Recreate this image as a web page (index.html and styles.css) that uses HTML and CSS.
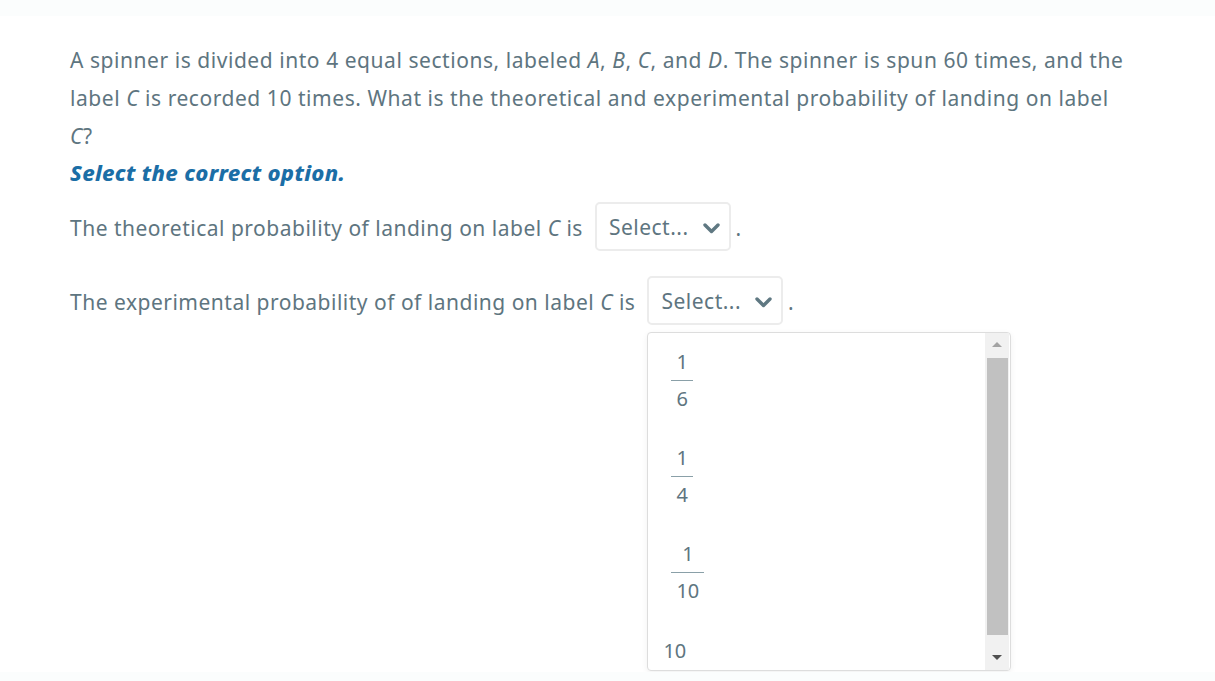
FILE: index.html
```html
<!DOCTYPE html>
<html lang="en">
<head>
    <meta charset="UTF-8">
    <title>Probability question</title>
    <link rel="stylesheet" href="styles.css">
</head>
<body>
    <div class="topbar"></div>
    <div class="panel">
        <p class="question">A spinner is divided into 4 equal sections, labeled <i>A</i>, <i>B</i>, <i>C</i>, and <i>D</i>. The spinner is spun 60 times, and the label <i>C</i> is recorded 10 times. What is the theoretical and experimental probability of landing on label <i>C</i>?</p>
        <p class="instruction">Select the correct option.</p>

        <div class="row">
            <span class="label">The theoretical probability of landing on label <i>C</i> is</span>
            <div class="select">Select... <span class="chev"><svg width="17" height="11" viewBox="0 0 17 11"><path d="M2 2l6.5 6.5L15 2" fill="none" stroke="#5f7882" stroke-width="3.4" stroke-linecap="round" stroke-linejoin="round"/></svg></span></div>
            <span class="dot">.</span>
        </div>

        <div class="row second">
            <span class="label">The experimental probability of of landing on label <i>C</i> is</span>
            <div class="drop">
                <div class="select">Select... <span class="chev"><svg width="17" height="11" viewBox="0 0 17 11"><path d="M2 2l6.5 6.5L15 2" fill="none" stroke="#5f7882" stroke-width="3.4" stroke-linecap="round" stroke-linejoin="round"/></svg></span></div>
                <div class="menu">
                    <div class="options">
                        <div class="option"><span class="frac"><span class="num">1</span><span class="den">6</span></span></div>
                        <div class="option"><span class="frac"><span class="num">1</span><span class="den">4</span></span></div>
                        <div class="option"><span class="frac"><span class="num">1</span><span class="den">10</span></span></div>
                        <div class="option plain">10</div>
                    </div>
                    <div class="scroll">
                        <span class="arrow up"></span>
                        <span class="thumb"></span>
                        <span class="arrow down"></span>
                    </div>
                </div>
            </div>
            <span class="dot">.</span>
        </div>
    </div>
    <div class="bottombar"></div>
</body>
</html>
```

FILE: styles.css
```css
* {
    margin: 0;
    padding: 0;
    box-sizing: border-box;
}
body {
    background: #ffffff;
    font-family: "Noto Sans", sans-serif;
    color: #5e7580;
    overflow: hidden;
    height: 681px;
}
.topbar {
    height: 16px;
    background: #fbfdfd;
}
.panel {
    height: 656px;
    padding: 25px 70px 0 70px;
    overflow: hidden;
}
.bottombar {
    height: 9px;
    background: #fbfdfd;
}
.question {
    font-size: 21px;
    letter-spacing: 0.55px;
    line-height: 38px;
    width: 1060px;
}
.instruction {
    font-size: 22px;
    letter-spacing: 0.3px;
    font-weight: 800;
    font-style: italic;
    color: #1b6ea6;
    line-height: 38px;
    margin-top: -2px;
}
.row {
    display: flex;
    align-items: flex-start;
    font-size: 21px;
    letter-spacing: 0.5px;
    margin-top: 11px;
}
.label {
    line-height: 49px;
    margin-right: 12px;
    padding-top: 2px;
}
.row.second {
    margin-top: 23px;
}
.select {
    display: flex;
    align-items: center;
    height: 49px;
    padding: 0 9px 0 12px;
    border: 2px solid #ececec;
    border-radius: 5px;
    background: #fff;
    white-space: nowrap;
}
.chev {
    margin-left: 14px;
    display: flex;
    padding-top: 3px;
}
.dot {
    line-height: 45px;
    padding-top: 4px;
    margin-left: 5px;
}
.drop {
    position: relative;
}
.menu {
    position: absolute;
    left: 0;
    top: 56px;
    width: 364px;
    height: 339px;
    display: flex;
    border: 1px solid #dddddd;
    border-radius: 4px;
    background: #fff;
    box-shadow: 0 2px 6px rgba(0, 0, 0, 0.06);
}
.options {
    flex: 1;
    padding-top: 11px;
    letter-spacing: 0;
}
.option {
    height: 96px;
    padding-left: 23px;
    font-size: 20px;
}
.option.plain {
    padding-left: 15px;
    padding-top: 5px;
    line-height: 28px;
}
.frac {
    display: inline-flex;
    flex-direction: column;
    align-items: center;
}
.num {
    line-height: 36px;
}
.den {
    line-height: 28px;
    border-top: 1.5px solid #8aa0a8;
    padding: 4px 5px 0;
}
.scroll {
    width: 24px;
    margin-right: 1px;
    background: #f1f1f1;
    display: flex;
    flex-direction: column;
    align-items: center;
}
.arrow {
    width: 0;
    height: 0;
    border-left: 5px solid transparent;
    border-right: 5px solid transparent;
    margin: 9px 0;
}
.arrow.up {
    border-bottom: 5px solid #a3a3a3;
}
.arrow.down {
    border-top: 5px solid #505050;
    margin-top: auto;
    margin-bottom: 10px;
}
.thumb {
    width: 21px;
    height: 277px;
    background: #c1c1c1;
    margin-top: 2px;
}
```
